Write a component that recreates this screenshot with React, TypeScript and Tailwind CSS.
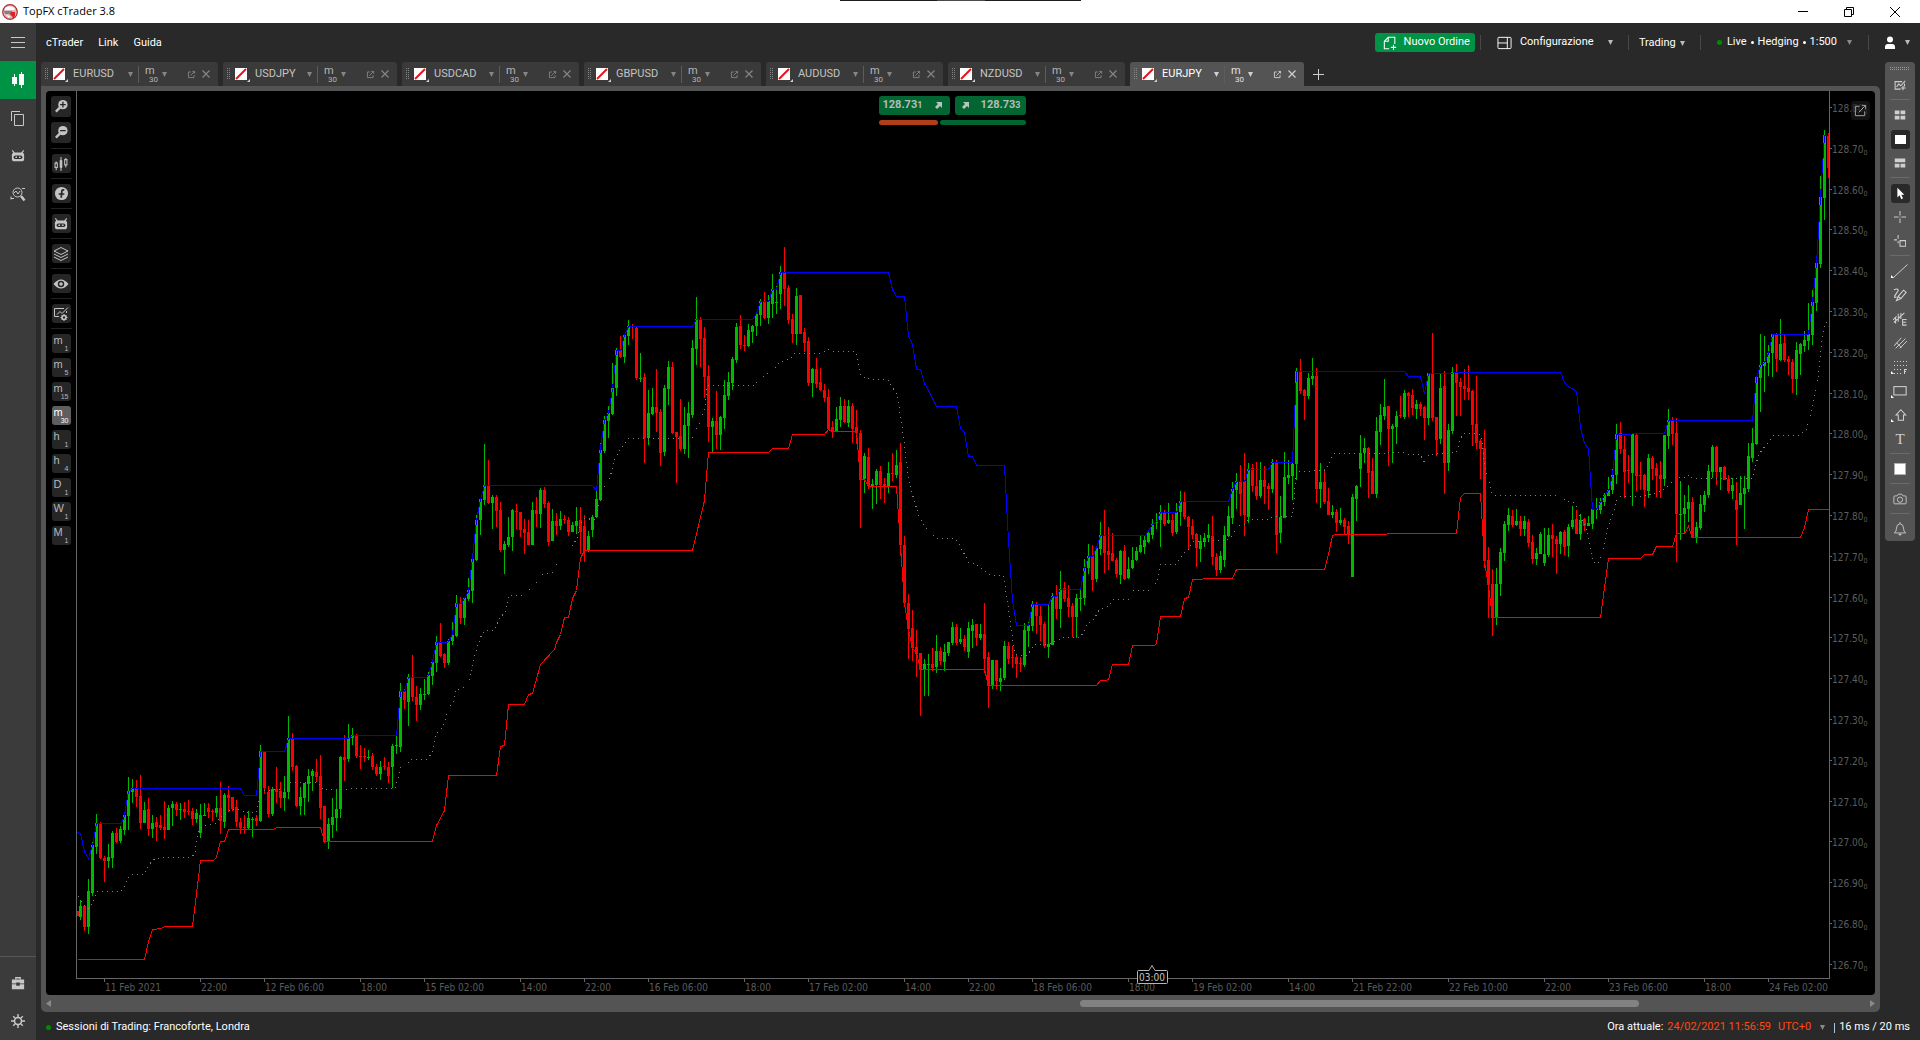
import type { ReactNode } from "react"
import { clsx } from "clsx"

// d = direction (u up, d down), then high, body top, body bottom, low
const CANDLES = `
u900,906,917,920 d905,906,927,931 u879,891,927,934 u842,845,893,896 u814,823,847,854 d822,824,858,859 d856,858,861,882 u844,857,861,868
u831,833,858,868 d828,833,842,843 u826,829,841,843 u813,815,830,835 u777,791,816,830 u779,788,792,803 d780,789,797,807 d775,796,823,829
u802,810,823,823 d798,809,829,836 u815,823,829,838 d817,822,827,841 d815,825,828,830 d801,827,830,839 u805,808,830,830 u801,804,808,826
d802,804,810,816 u803,809,810,820 d802,809,812,818 d800,811,812,815 d808,811,819,825 u809,813,819,823 u804,815,833,838 u803,815,816,816
d803,808,812,818 d809,811,812,821 u796,808,813,817 d782,808,821,834 u793,795,822,828 d786,795,798,812 d797,797,809,811 d800,807,822,827
d818,822,828,834 d815,827,828,834 u811,818,828,829 u817,819,820,837 d815,818,821,826 u745,751,821,822 d751,752,788,794 d786,792,814,817
u787,789,814,816 d767,789,792,803 d782,791,798,808 u776,792,798,811 u716,738,792,799 d733,739,767,771 d765,766,806,807 u787,797,806,815
u783,783,798,815 u769,776,784,802 u769,771,776,791 d759,772,777,782 d755,776,808,819 d806,806,842,843 u818,824,841,849 u798,817,825,838
u789,809,818,831 u756,757,809,818 d735,757,760,781 u724,738,759,762 u728,735,738,745 d734,736,756,758 d745,756,757,769 d748,756,757,762
u750,757,758,760 d753,756,767,770 d764,767,774,776 u761,767,774,780 d757,766,767,770 d762,767,776,783 u744,746,767,788 u735,745,746,754
u683,691,747,752 d689,691,700,709 u674,677,702,726 d655,678,697,701 d686,697,705,721 u688,694,705,710 u679,694,695,700 u672,675,694,695
u662,662,676,685 u636,642,663,672 d623,643,656,657 d653,654,663,668 u639,641,663,665 u622,635,641,645 u595,603,636,637 d597,604,618,624
u597,598,618,625 u578,590,599,601 u553,559,591,603 u515,520,560,561 u499,499,520,535 u444,485,500,505 d460,486,503,504 u495,497,503,529
d495,497,511,527 d502,510,550,552 u541,544,550,574 u517,537,545,547 u509,510,537,551 d504,511,512,529 d512,512,530,537 d519,529,533,554
d520,532,545,545 u502,510,545,545 d497,510,514,527 u488,490,514,528 d487,490,504,508 d501,503,542,546 u509,521,541,541 d513,521,526,535
u511,519,526,530 d515,519,520,524 d517,520,532,536 u522,525,532,532 u507,521,526,534 d507,520,532,554 d515,526,551,562 u531,536,550,552
u515,517,530,537 u491,499,517,518 u443,450,500,500 u416,420,451,453 u406,413,421,438 u363,388,414,415 u348,350,388,396 d336,350,357,358
u335,335,357,363 u320,326,336,345 d324,326,327,339 d327,328,378,380 u353,378,379,382 d373,377,438,463 u390,413,438,445 u388,407,414,415
d369,407,413,432 d409,412,453,466 u385,388,452,456 u361,367,389,405 d362,367,433,434 d432,432,437,483 d399,436,449,451 u407,425,449,454
u402,413,426,458 u340,348,415,418 u297,319,349,365 d317,319,339,367 d327,338,377,398 d365,376,427,442 u418,421,427,452 d391,421,435,449
u416,417,435,450 u380,395,418,429 u372,382,396,400 u357,359,383,390 u323,327,360,363 d315,326,345,349 d335,345,346,351 u324,330,346,347
u325,326,332,343 u312,314,326,336 u299,301,315,326 d292,302,318,319 u295,301,318,324 u274,289,304,318 u286,302,303,314 u266,272,294,309
d247,273,289,306 d285,288,320,324 d314,319,334,343 u288,296,334,345 d295,295,334,334 d328,332,343,352 d337,341,383,386 u368,369,383,397
d358,369,384,388 d368,382,390,391 d384,390,398,402 d389,397,429,429 d421,427,432,438 u407,419,431,431 u397,406,420,427 d399,406,422,423
u400,406,423,427 d403,406,429,443 d410,427,433,444 d430,433,480,528 u453,456,479,493 d448,457,486,489 u479,484,486,509 u469,471,485,504
d466,471,485,499 d478,484,486,503 u462,473,486,493 d453,473,474,481 u450,465,475,478 d443,462,545,556 d536,545,603,606 d594,603,629,659
d610,628,648,661 d630,647,654,677 d653,653,670,716 u659,664,669,696 u654,664,665,696 d648,664,668,671 u635,651,667,673 d647,651,661,665
u644,652,662,671 u642,642,653,656 u622,627,643,645 d624,627,643,645 u628,639,642,644 d635,639,647,651 u622,628,652,658 u619,625,631,648
d624,624,638,646 u624,634,638,640 d603,634,659,673 d652,657,686,708 u660,660,685,689 d660,660,681,689 u668,678,682,691 u641,646,678,680
d642,646,659,664 d646,657,658,668 d655,657,664,678 d657,663,664,672 u623,630,665,667 u622,625,631,647 u601,604,626,631 d602,604,616,634
d606,616,625,641 d622,624,646,648 u604,644,647,658 u593,596,645,645 d585,596,609,619 u571,589,609,628 d582,588,599,602 d585,598,607,617
d603,606,617,637 u594,598,617,638 u589,598,599,611 u559,568,598,605 u544,556,568,574 d545,556,580,591 u546,548,579,582 u522,535,549,555
d510,535,553,573 d527,551,555,570 d533,553,561,561 d558,560,574,577 u550,551,575,584 d545,551,579,580 u557,569,578,579 u547,560,568,569
u547,551,560,561 u536,545,552,553 u535,540,547,554 u531,533,542,543 u519,524,535,539 u513,522,523,529 u505,512,520,547 d510,512,524,526
u503,520,523,524 d514,520,533,536 u503,512,532,534 u491,501,512,526 d492,501,517,519 d516,517,527,550 d519,526,535,539 d533,534,548,567
u535,541,549,562 u533,538,542,547 u524,535,538,542 d516,536,557,565 d553,557,570,576 u551,556,570,573 u526,535,560,567 u506,516,536,537
u482,489,518,524 u473,481,490,509 d465,481,494,516 d453,481,515,536 u463,469,517,523 d464,468,486,492 d462,486,496,500 u462,480,496,498
d466,480,487,504 d483,486,489,510 u459,462,489,493 d460,463,535,553 u496,517,533,543 u452,477,518,518 u460,475,478,484 u462,464,476,500
u368,371,464,480 d359,371,391,394 d389,390,396,420 u373,378,396,399 u358,376,379,385 d368,376,489,503 u463,482,489,508 d469,482,502,504
d488,501,515,515 u505,512,515,518 d509,512,523,532 u508,520,523,525 d518,520,527,534 d521,526,535,544 u494,497,577,577 u485,486,499,521
u435,453,469,487 u438,448,453,463 d447,448,473,498 d458,471,494,494 u417,431,494,498 u404,415,432,445 u379,407,416,420 d406,406,429,466
u424,426,429,463 u411,416,427,444 d396,415,416,418 u390,393,417,419 d392,393,396,417 d389,395,408,415 u400,404,409,419 d402,404,409,416
d406,407,418,440 u373,373,418,425 d333,373,418,421 d417,417,440,456 u374,388,439,444 d371,386,463,494 u424,430,463,471 u367,372,431,434
d364,373,383,416 d378,382,387,416 d369,386,389,400 d365,388,392,400 d390,391,425,446 d376,424,443,449 d439,441,449,479 d430,448,561,568
d547,560,585,618 d569,584,618,636 u568,584,617,625 u548,552,584,596 u521,524,553,561 u508,515,525,531 d510,516,525,527 u509,521,525,526
d516,521,529,536 u516,521,529,536 d519,522,543,547 d535,542,559,564 u548,553,559,565 u532,534,554,554 u528,554,563,566 u528,535,555,557
d524,535,539,557 d536,539,544,574 u531,532,544,554 d530,532,547,555 u524,527,546,557 u506,520,527,529 d510,519,534,534 u514,520,534,540
d518,519,526,531 u516,523,526,526 u509,509,524,529 u498,509,510,519 u498,502,510,514 u493,495,502,506 u477,490,496,496 u469,475,490,494
u424,434,475,484 d422,433,449,454 d436,449,472,498 d455,470,471,483 u433,434,473,506 d433,435,476,491 d462,475,476,490 d474,475,490,507
u454,458,491,498 d456,458,469,480 d463,468,476,497 d461,475,479,498 u435,435,479,486 u409,420,436,449 d417,421,434,445 d418,433,514,562
u481,514,515,540 u495,508,514,534 u485,502,509,522 d497,502,538,538 u522,527,537,543 u495,504,528,530 u491,495,505,512 u465,471,495,498
u445,447,472,478 d446,447,472,485 u467,467,472,490 d466,467,480,480 d475,479,491,493 u478,485,491,499 d482,500,510,545 u476,493,505,505
u476,488,494,529 u443,456,489,492 u428,443,458,462 u377,377,444,445 u334,365,378,412 u336,362,366,392 u345,353,363,376 u334,334,353,377
d333,335,359,372 u319,344,360,361 d335,343,360,362 d356,359,362,375 d359,362,379,393 u342,350,379,395 u343,344,354,375 u331,340,346,352
u303,334,341,350 u290,302,335,345 u263,263,303,311 u176,197,264,268 u130,135,198,220 d133,135,168,178`
  .trim()
  .split(/\s+/)
  .map((entry, i) => {
    const [high, top, bottom, low] = entry.slice(1).split(",").map(Number)
    return { x: 80 + i * 4, up: entry[0] === "u", high, top, bottom, low }
  })

const UPPER =
  "77,832 80,833 84,851 88,858 92,845 96,823 121,823 124,815 128,791 132,788 240,788 244,795 256,795 260,751 284,751 288,738 348,738 352,735 396,735 400,691 404,691 408,677 426,677 428,675 432,661 436,642 447,642 452,634 456,603 461,603 464,598 468,591 472,557 476,520 480,499 484,485 592,485 596,490 600,447 604,420 608,413 612,388 616,350 620,350 624,335 628,326 692,326 696,319 752,319 756,313 760,301 768,301 772,289 776,289 780,272 888,272 892,289 896,296 904,296 908,335 912,344 916,369 920,369 924,383 928,390 936,406 956,406 960,428 964,432 968,456 972,456 976,465 1004,465 1008,540 1012,600 1016,625 1028,625 1032,604 1048,604 1052,596 1056,596 1060,589 1080,589 1084,568 1088,556 1092,556 1096,547 1100,535 1145,535 1152,524 1156,522 1160,512 1176,512 1180,501 1228,501 1232,489 1236,481 1244,481 1248,469 1268,469 1272,462 1292,462 1296,371 1404,371 1408,376 1420,376 1424,393 1428,373 1452,373 1453,372 1560,372 1564,382 1568,386 1576,391 1580,427 1584,443 1588,448 1592,509 1596,509 1600,502 1604,495 1608,490 1612,475 1616,434 1631,434 1632,433 1664,433 1668,420 1752,420 1756,377 1760,365 1764,362 1768,353 1772,334 1808,334 1812,302 1816,263 1820,197 1824,135 1828,135"

const LOWER =
  "77,959 144,959 148,941 152,929 161,928 164,926 192,926 200,860 213,860 216,857 220,841 224,841 228,829 273,829 276,827 320,827 324,841 432,841 436,825 444,810 448,775 496,775 500,746 504,745 508,704 524,704 528,694 532,693 540,664 554,649 556,642 560,634 564,617 568,617 572,598 576,590 580,558 584,550 692,550 704,500 708,452 768,452 772,448 788,448 792,434 824,434 828,429 832,431 856,431 860,479 864,479 868,486 896,486 900,545 904,603 908,629 912,648 916,652 920,669 984,669 988,685 1096,685 1100,680 1105,680 1108,679 1112,664 1128,664 1132,645 1154,645 1156,643 1160,616 1180,616 1184,598 1188,597 1192,579 1202,579 1203,578 1232,578 1236,569 1324,569 1328,554 1332,535 1335,534 1386,534 1387,533 1456,533 1460,497 1464,493 1480,493 1484,561 1488,585 1492,617 1600,617 1605,580 1608,558 1640,558 1644,554 1652,554 1656,546 1672,546 1676,533 1684,533 1688,526 1692,537 1800,537 1804,527 1808,509 1829,509"

const MIDDLE =
  "78,896 84,905 88,908 92,902 96,891 120,891 124,887 128,876 133,874 144,874 148,865 152,860 156,858 163,857 190,857 194,854 198,832 202,825 215,823 220,816 224,815 230,809 240,809 244,812 256,812 260,790 284,789 288,782 318,782 323,789 348,789 352,788 395,788 400,767 404,766 410,759 426,759 432,752 436,733 440,729 444,723 448,708 452,703 456,689 462,688 468,682 472,665 476,648 480,637 484,630 494,630 500,615 504,614 508,595 523,595 529,589 535,583 538,578 544,573 553,572 558,560 563,554 569,550 577,537 580,523 584,518 594,519 600,500 604,485 608,482 615,457 619,450 628,438 692,438 700,420 704,408 707,385 754,385 759,377 763,376 771,371 780,361 789,359 794,353 820,353 828,349 832,351 854,351 857,357 860,374 863,377 871,379 887,379 893,388 897,395 903,437 908,478 913,498 919,517 924,526 934,536 938,538 955,538 958,543 962,550 968,562 973,563 980,567 987,573 991,575 1003,575 1007,602 1012,637 1014,652 1017,655 1027,655 1030,650 1034,644 1048,644 1057,640 1061,637 1080,637 1087,623 1092,621 1099,609 1108,606 1113,599 1128,599 1133,590 1148,590 1157,581 1160,564 1175,564 1183,553 1188,549 1192,541 1226,540 1232,535 1236,525 1243,525 1248,519 1268,519 1272,516 1292,516 1296,471 1325,470 1333,453 1387,453 1389,452 1405,452 1408,454 1420,454 1424,462 1427,459 1428,454 1456,452 1460,438 1464,433 1478,433 1481,436 1484,463 1488,480 1492,494 1495,495 1556,495 1569,501 1574,502 1578,512 1587,530 1592,561 1597,563 1600,559 1604,542 1608,525 1612,515 1616,500 1620,496 1643,496 1660,491 1668,485 1676,477 1685,477 1689,474 1692,478 1752,478 1758,454 1770,439 1773,435 1798,435 1806,429 1812,406 1817,383 1820,353 1823,327 1826,322"

const TIME_LABELS: [number, string][] = [
  [104, "11 Feb 2021"],
  [200, "22:00"],
  [264, "12 Feb 06:00"],
  [360, "18:00"],
  [424, "15 Feb 02:00"],
  [520, "14:00"],
  [584, "22:00"],
  [648, "16 Feb 06:00"],
  [744, "18:00"],
  [808, "17 Feb 02:00"],
  [904, "14:00"],
  [968, "22:00"],
  [1032, "18 Feb 06:00"],
  [1128, "18:00"],
  [1192, "19 Feb 02:00"],
  [1288, "14:00"],
  [1352, "21 Feb 22:00"],
  [1448, "22 Feb 10:00"],
  [1544, "22:00"],
  [1608, "23 Feb 06:00"],
  [1704, "18:00"],
  [1768, "24 Feb 02:00"],
]

const PRICE_LABELS = Array.from({ length: 22 }, (_, k) => ({
  y: Math.round(107 + k * 40.8),
  text: (128.8 - k * 0.1).toFixed(2),
}))

function Chart() {
  return (
    <svg
      viewBox="76 91 1799 904"
      preserveAspectRatio="xMaxYMin meet"
      className="h-full w-full font-['DejaVu_Sans_Condensed',sans-serif] text-[10px]"
      role="img"
      aria-label="EURJPY m30"
    >
      <defs>
        <clipPath id="plot">
          <rect x="77" y="91" width="1752" height="887" />
        </clipPath>
      </defs>
      <g clipPath="url(#plot)" shapeRendering="crispEdges">
        <rect x="77" y="911" width="2" height="5" fill="#f00" />
        {CANDLES.map((c) => (
          <g key={c.x} fill={c.up ? "#00ba00" : "#f00"}>
            <rect x={c.x} y={c.high} width="1" height={c.low - c.high} />
            <rect x={c.x - 1} y={c.top} width="3" height={Math.max(1, c.bottom - c.top)} />
          </g>
        ))}
        <g fill="none" transform="translate(0.5 0.5)">
          <polyline points={LOWER} stroke="#f00" />
          <polyline points={UPPER} stroke="#00f" />
          <polyline points={MIDDLE} stroke="#808080" strokeDasharray="1 4" />
        </g>
      </g>

      <g fill="#666" shapeRendering="crispEdges">
        <rect x="76" y="91" width="1" height="888" />
        <rect x="76" y="978" width="1754" height="1" />
        <rect x="1829" y="91" width="1" height="888" />
        {TIME_LABELS.map(([x]) => (
          <rect key={x} x={x} y="979" width="1" height="3" />
        ))}
        {PRICE_LABELS.map((p) => (
          <rect key={p.y} x="1830" y={p.y} width="2" height="1" />
        ))}
      </g>
      <g fill="#5c5c5c">
        {TIME_LABELS.map(([x, text]) => (
          <text key={x} x={x + 1} y="991">
            {text}
          </text>
        ))}
        {PRICE_LABELS.map((p) => (
          <text key={p.y} x="1832" y={p.y + 5}>
            {p.text}
            <tspan className="text-[7px]" dy="2">
              0
            </tspan>
          </text>
        ))}
      </g>
      <path d="M1138.5 970.5h10.500l3-5 3 5h11.500q1 0 1 1v11q0 1-1 1h-28q-1 0-1-1v-11q0-1 1-1z" fill="#000" stroke="#b5b5b5" />
      <text x="1139" y="981" fill="#c4c4c4">
        03:00
      </text>
    </svg>
  )
}

function Svg({ size = 16, children, className }: { size?: number; children: ReactNode; className?: string }) {
  return (
    <svg width={size} height={size} viewBox="0 0 16 16" fill="none" stroke="currentColor" className={clsx("shrink-0", className)}>
      {children}
    </svg>
  )
}

function Caret({ className }: { className?: string }) {
  return (
    <svg width="5" height="5" viewBox="0 0 5 5" className={clsx("shrink-0", className)}>
      <path d="M0 0h5L2.500 5z" fill="currentColor" />
    </svg>
  )
}

function Logo() {
  return (
    <svg width="16" height="16" viewBox="0 0 16 16">
      <circle cx="8" cy="8" r="7.300" fill="#d9bcbc" stroke="#b02a2a" strokeWidth="1.200" />
      <path d="M3 4q5-3.500 9.500 0v2H3z" fill="#fff" />
      <path d="M2 7h8l1 3H3z" fill="#8a8080" />
      <path d="M9 8h4v4l-2 3-1-3-2-1z" fill="#e01f28" />
      <path d="M4 11l4 1-1 2z" fill="#fff" />
    </svg>
  )
}

const robot = (
  <>
    <path d="M1.500 1.500l2.500 3.500M14.500 1.500L12 5" strokeWidth="1.300" />
    <path d="M1 7q0-3 3-3h8q3 0 3 3v4q0 3-3 3H4q-3 0-3-3z" fill="currentColor" stroke="none" />
    <rect x="3" y="7.500" width="10" height="4" rx="2" fill="#2b2b2b" stroke="none" />
    <path d="M5 9.500h2M9 9.500h2" strokeWidth="1.600" />
  </>
)

const popout = (
  <>
    <path d="M7 3.500H2.500v10h10V9" />
    <path d="M6 10l7.500-7.500M9.500 2.500h4v4" />
  </>
)

function SideNav() {
  return (
    <nav className="flex w-9 shrink-0 flex-col bg-[#3b3b3b] text-[#c8c8c8] [&>button]:flex [&>button]:h-[38px] [&>button]:items-center [&>button]:justify-center">
      <button aria-label="Menu">
        <Svg>
          <path d="M1 3h14M1 8h14M1 13h14" shapeRendering="crispEdges" />
        </Svg>
      </button>
      <button aria-label="Trade" className="bg-[#009345] text-white">
        <Svg>
          <path d="M4.500 2v12M11.500 0v16" />
          <path d="M2 5h5v7H2zM9 2h5v11H9z" fill="currentColor" stroke="none" />
        </Svg>
      </button>
      <button aria-label="Copy">
        <Svg>
          <path d="M1.500 11V1.500H10M4.500 4.500h9v11h-9z" />
        </Svg>
      </button>
      <button aria-label="Automate">
        <Svg size={14}>{robot}</Svg>
      </button>
      <button aria-label="Analyze">
        <Svg>
          <circle cx="7.500" cy="6.500" r="4.500" />
          <path d="M4 7l2-2 2 3 2-3M1 12.500h3M1 10.500v3M12 2.500h3" />
          <path d="M11 10l3.500 4.500" strokeWidth="2.500" />
        </Svg>
      </button>
      <div className="grow" />
      <hr className="mb-[7px] border-[#575757]" />
      <button aria-label="Portfolio">
        <Svg size={14}>
          <path d="M5.500 4V2h5v2" strokeWidth="1.500" />
          <path d="M1 4h14v4.500h-5V7.500H6v1H1zM1 9.500h5v1.500h4V9.500h5V15H1z" fill="currentColor" stroke="none" />
        </Svg>
      </button>
      <button aria-label="Impostazioni">
        <Svg size={14}>
          <circle cx="8" cy="8" r="4" strokeWidth="1.800" />
          <path d="M8 0v4M8 12v4M0 8h4M12 8h4M2.500 2.500l2.500 2.500M11 11l2.500 2.500M13.500 2.500L11 5M5 11l-2.500 2.500" strokeWidth="1.600" />
        </Svg>
      </button>
    </nav>
  )
}

function Separator({ className }: { className?: string }) {
  return <span className={clsx("h-[15px] w-px bg-[#484848]", className)} />
}

function Header() {
  return (
    <header className="flex h-[39px] shrink-0 items-center text-white">
      <nav className="flex gap-[15px] pl-[10px] pt-[2px]">
        <a href="#ctrader">cTrader</a>
        <a href="#link">Link</a>
        <a href="#guida">Guida</a>
      </nav>
      <div className="ml-auto flex items-center">
        <button className="flex h-[19px] w-[100px] items-center justify-between rounded-[3px] bg-[#009345] pr-[5px] pl-2">
          <Svg size={14}>
            <path d="M7 14.500H1.500V6L6 1.500h7.500V9M6 1.500V6H1.500M9 13h6M12 10v6" strokeWidth="1.200" />
          </Svg>
          Nuovo Ordine
        </button>
        <Separator className="ml-[5px]" />
        <button className="ml-4 flex items-center">
          <Svg size={15}>
            <rect x="1" y="2.500" width="14" height="12" rx="1" />
            <path d="M1 8.500h10M11 2.500v12" />
          </Svg>
          <span className="ml-2 w-[73px] text-left">Configurazione</span>
          <Caret className="ml-[15px] text-[#bbb]" />
        </button>
        <Separator className="ml-[15px]" />
        <button className="ml-[10px] flex items-center pt-[2px]">
          <span className="w-[37px] text-left">Trading</span>
          <Caret className="ml-[4px] text-[#bbb]" />
        </button>
        <Separator className="ml-[15px]" />
        <button className="ml-4 flex items-center">
          <span className="size-[5px] rounded-full bg-[#008a00]" />
          <span className="ml-[5px] flex items-center gap-[4px]">
            Live <i className="size-[3px] rounded-full bg-white" /> Hedging <i className="size-[3px] rounded-full bg-white" /> 1:500
          </span>
          <Caret className="ml-[10px] text-[#8a8a8a]" />
        </button>
        <Separator className="ml-4" />
        <button aria-label="Account" className="ml-[15px] mr-[10px] flex items-center">
          <svg width="12" height="14" viewBox="0 0 12 14" fill="#fff">
            <circle cx="6" cy="3.500" r="3" />
            <path d="M1 13v-2q0-3 3-3h4q3 0 3 3v2z" />
          </svg>
          <Caret className="ml-[9px] text-[#bbb]" />
        </button>
      </div>
    </header>
  )
}

const TABS = ["EURUSD", "USDJPY", "USDCAD", "GBPUSD", "AUDUSD", "NZDUSD", "EURJPY"]

function SymbolTab({ symbol, active }: { symbol: string; active: boolean }) {
  return (
    <div
      role="tab"
      aria-selected={active}
      className={clsx(
        "flex h-6 items-center rounded-t-[3px]",
        symbol.endsWith("JPY") ? "w-[174px]" : "w-[177px]",
        active ? "bg-[#545454] text-white" : "bg-[#3a3a3a] text-[#c4c4c4]",
      )}
    >
      <svg width="3" height="12" viewBox="0 0 3 12" className="ml-1 shrink-0" shapeRendering="crispEdges">
        <path d="M.5 0v12M2.500 0v12" stroke="#858585" strokeDasharray="1 1" />
      </svg>
      <svg width="15" height="15" viewBox="0 0 15 15" className="ml-[5px] shrink-0">
        <rect x="0" y="1" width="12" height="12" fill="#fff" />
        <path d="M1 12L11 2" stroke="#e3131b" strokeWidth="2" />
        <path d="M15 12v3h-3z" fill="#d0d0d0" />
      </svg>
      <span className="ml-[5px]">{symbol}</span>
      <span className={clsx("ml-auto flex items-center", active ? "text-[#d0d0d0]" : "text-[#858585]")}>
        <button aria-label={`Simbolo ${symbol}`}>
          <Caret />
        </button>
        <span className="ml-[5px] h-[17px] w-px bg-[#5c5c5c]" />
        <button className="ml-[6px] flex items-center">
          <span className={clsx("flex h-[18px] w-[13px] flex-col", active ? "text-[#e0e0e0]" : "text-[#b5b5b5]")}>
            <span className="text-left leading-[11px]">m</span>
            <span className="text-right text-[8px] leading-[8px]">30</span>
          </span>
          <Caret className="ml-[4px]" />
        </button>
        <button aria-label="Stacca" className="ml-5">
          <Svg size={9}>
            <g strokeWidth="1.600">{popout}</g>
          </Svg>
        </button>
        <button aria-label="Chiudi" className="ml-[6px] mr-2">
          <Svg size={8}>
            <path d="M1 1l14 14M15 1L1 15" strokeWidth="2.400" />
          </Svg>
        </button>
      </span>
    </div>
  )
}

function ToolButton({ label, large, children }: { label: string; large?: boolean; children: ReactNode }) {
  return (
    <button
      aria-label={label}
      className={clsx(
        "flex items-center justify-center rounded-[3px] bg-[#262626] text-[#c4c4c4]",
        large ? "h-[21px] w-5" : "size-[19px]",
      )}
    >
      {children}
    </button>
  )
}

const TIMEFRAMES = ["m1", "m5", "m15", "m30", "h1", "h4", "D1", "W1", "M1"]

function ChartTools() {
  const line = <hr className="my-[5px] w-[21px] border-[#222]" />
  return (
    <div className="flex w-[30px] shrink-0 flex-col items-center pt-[5px]">
      <ToolButton label="Zoom avanti" large>
        <Svg size={15}>
          <circle cx="9.500" cy="6" r="5" fill="currentColor" stroke="none" />
          <path d="M6.500 9L2 13.500" strokeWidth="2.500" />
          <path d="M6.500 6h6M9.500 3v6" stroke="#262626" strokeWidth="1.400" />
        </Svg>
      </ToolButton>
      <div className="h-[5px]" />
      <ToolButton label="Zoom indietro" large>
        <Svg size={15}>
          <circle cx="9.500" cy="6" r="5" fill="currentColor" stroke="none" />
          <path d="M6.500 9L2 13.500" strokeWidth="2.500" />
          <path d="M6.500 6h6" stroke="#262626" strokeWidth="1.400" />
        </Svg>
      </ToolButton>
      {line}
      <ToolButton label="Tipo di grafico">
        <Svg size={14}>
          <path d="M2.500 5v2M2.500 12v3M8 0v16M13.500 1v2M13.500 9v3M1.200 7h2.600v5H1.200zM12.200 3h2.600v6h-2.600z" strokeWidth="1.200" />
          <path d="M7 4h2v8H7z" fill="currentColor" />
        </Svg>
      </ToolButton>
      {line}
      <ToolButton label="Indicatori">
        <Svg size={15}>
          <circle cx="8" cy="8" r="7" fill="currentColor" stroke="none" />
          <path d="M11 4.500Q8.500 3.500 8.300 6L7.700 12.500M5 8.500h6" stroke="#262626" strokeWidth="1.800" />
        </Svg>
      </ToolButton>
      {line}
      <ToolButton label="cBot">
        <Svg size={14}>{robot}</Svg>
      </ToolButton>
      {line}
      <ToolButton label="Livelli">
        <Svg size={16}>
          <path d="M8 1.500l7 3.500-7 3.500L1 5zM1 8l7 3.500L15 8M1 11l7 3.500 7-3.500" />
        </Svg>
      </ToolButton>
      {line}
      <ToolButton label="Visualizza">
        <Svg size={16}>
          <path d="M.500 8Q8-1 15.500 8 8 17 .500 8z" fill="currentColor" stroke="none" />
          <circle cx="8" cy="8" r="2.500" stroke="#262626" strokeWidth="1.500" />
        </Svg>
      </ToolButton>
      {line}
      <ToolButton label="Opzioni grafico">
        <Svg size={16}>
          <path d="M6 10.500H1.500v-8H11M13.500 5v2M4 8.500l3-3 2 2 6-6" />
          <circle cx="11" cy="11.500" r="2" strokeWidth="1.600" />
          <path d="M11 8v1.500M11 13.500V15M7.500 11.500H9M13 11.500h1.500M8.700 9.200l1 1M12.300 12.800l1 1M13.300 9.200l-1 1M9.700 12.800l-1 1" />
        </Svg>
      </ToolButton>
      {line}
      <div className="flex flex-col gap-[5px] font-['Liberation_Sans',sans-serif]">
        {TIMEFRAMES.map((tf) => (
          <button
            key={tf}
            className={clsx(
              "flex size-[19px] flex-col rounded-[3px] px-[2px] pt-px",
              tf === "m30" ? "bg-[#5e5e5e] text-white" : "bg-[#262626] text-[#b8b8b8]",
            )}
          >
            <span className="text-left leading-[11px]">{tf[0]}</span>
            <span className="self-end text-[7px] leading-[6px]">{tf.slice(1)}</span>
          </button>
        ))}
      </div>
    </div>
  )
}

function RailButton({ label, active, corner, children }: { label: string; active?: boolean; corner?: boolean; children: ReactNode }) {
  return (
    <button aria-label={label} className="relative flex size-6 items-center justify-center">
      <span className={clsx("flex size-[19px] items-center justify-center rounded-[3px]", active ? "bg-[#292929] text-white" : "text-[#cfcfcf]")}>
        {children}
      </span>
      {corner && (
        <svg width="3" height="3" viewBox="0 0 3 3" className="absolute bottom-[5px] left-[3px]">
          <path d="M0 0l3 3H0z" fill="#fff" />
        </svg>
      )}
    </button>
  )
}

function DrawingRail() {
  const line = <hr className="mt-[2px] mb-[3px] w-5 border-[#6b6b6b]" />
  return (
    <aside className="flex w-[30px] shrink-0 flex-col items-center self-start rounded-[4px] bg-[#545454]">
      <svg width="20" height="11" viewBox="0 0 20 11" shapeRendering="crispEdges">
        <path d="M0 5.500h20M0 7.500h20" stroke="#999" strokeDasharray="1 1" />
      </svg>
      <RailButton label="Grafico">
        <Svg size={12}>
          <path d="M9 13.500H1.500v-10H11M3.500 10.500l3-4 2.500 2.500 6-6.500M14 6v4M12 9v6M9.500 12h6" strokeWidth="1.400" />
        </Svg>
      </RailButton>
      {line}
      <RailButton label="Griglia">
        <Svg size={12}>
          <path d="M1 2h6.300v5H1zM8.700 2H15v5H8.700zM1 9h6.300v5H1zM8.700 9H15v5H8.700z" fill="currentColor" stroke="none" />
        </Svg>
      </RailButton>
      <RailButton label="Singolo" active>
        <span className="h-[9px] w-[11px] bg-white" />
      </RailButton>
      <RailButton label="Libero">
        <Svg size={12}>
          <path d="M1 2h14v5H1zM1 9h6.300v5H1zM8.700 9H15v5H8.700z" fill="currentColor" stroke="none" />
        </Svg>
      </RailButton>
      {line}
      <RailButton label="Puntatore" active>
        <Svg size={14}>
          <path d="M5 2v11l2.500-2.500L9.500 15l2-1-2-4H13z" fill="currentColor" stroke="none" />
        </Svg>
      </RailButton>
      <RailButton label="Croce">
        <Svg size={12}>
          <path d="M8 0v6M8 10v6M0 8h6M10 8h6M7.500 8h1" strokeWidth="1.300" />
        </Svg>
      </RailButton>
      <RailButton label="Croce con lente">
        <Svg size={12}>
          <path d="M5.500 0v5M5.500 8v3M0 6.500h4M8 7.500h7.500V15H8z" strokeWidth="1.400" />
        </Svg>
      </RailButton>
      {line}
      <RailButton label="Linea" corner>
        <Svg size={16}>
          <path d="M1.500 14.500l14-13" />
        </Svg>
      </RailButton>
      <RailButton label="Matita">
        <Svg size={14}>
          <path d="M1 2q5-2 5 1L2 9q-1 3 2 1M4 14.500l2-5 6-7 3 2.500-6 7zM6 9.500l3 2.500" strokeWidth="1.300" />
        </Svg>
      </RailButton>
      <RailButton label="Equidistante">
        <Svg size={14}>
          <path d="M0 9l4-4M3 13V6M6 11V2M9 8V1M1 12L13 1M15.500 8.500H11v6.500h4.500M11 11.800h4" strokeWidth="1.200" />
        </Svg>
      </RailButton>
      <RailButton label="Forchetta">
        <Svg size={13}>
          <path d="M0 11L9 1M2 14L14 2M7 14l9-9M3 7l6 6" strokeWidth="1.200" />
        </Svg>
      </RailButton>
      <RailButton label="Fibonacci" corner>
        <svg width="15" height="15" viewBox="0 0 15 15" stroke="currentColor" shapeRendering="crispEdges">
          <path d="M1 1.500h14M1 5.500h14M1 9.500h9M1 13.500h9" strokeDasharray="1 2" />
          <path d="M11.500 9v5M11 9.500h3M11 11.500h2" />
        </svg>
      </RailButton>
      <RailButton label="Forme" corner>
        <Svg size={14}>
          <rect x="1" y="3" width="14" height="9.500" strokeWidth="1.200" />
        </Svg>
      </RailButton>
      <RailButton label="Frecce" corner>
        <Svg size={14}>
          <path d="M9 2l5.500 6H12v6H6V8H3.500z" strokeWidth="1.200" />
        </Svg>
      </RailButton>
      <RailButton label="Testo">
        <span className="font-['Liberation_Serif',serif] text-[15px] leading-[15px]">T</span>
      </RailButton>
      {line}
      <RailButton label="Colore">
        <span className="size-3 border border-[#b0b0b0] bg-white" />
      </RailButton>
      {line}
      <RailButton label="Istantanea">
        <Svg size={14}>
          <path d="M1 5.500q0-1 1-1h2.500L6 2.500h4l1.500 2H14q1 0 1 1v7q0 1-1 1H2q-1 0-1-1z" />
          <circle cx="8" cy="8.800" r="3" />
        </Svg>
      </RailButton>
      {line}
      <RailButton label="Avvisi">
        <Svg size={14}>
          <path d="M1.500 12.500Q4 11 4 7q0-4.500 4-5 4 .500 4 5 0 4 2.500 5.500zM8 0v2" />
          <path d="M6.500 14q1.500 2 3 0z" fill="currentColor" />
        </Svg>
      </RailButton>
    </aside>
  )
}

function QuoteButtons() {
  const arrow = (
    <svg width="7" height="7" viewBox="0 0 7 7">
      <path d="M1 0h6v6L5 4 2 7 0 5l3-3z" fill="#b9c4bd" />
    </svg>
  )
  return (
    <div className="absolute top-[5px] left-1/2 w-[147px] -translate-x-[82px]">
      <div className="flex gap-[5px] font-bold text-[#b5bdb8] [&>button]:flex [&>button]:h-[19px] [&>button]:w-[71px] [&>button]:items-center [&>button]:justify-between [&>button]:rounded-[3px] [&>button]:bg-[#036632]">
        <button className="pr-2 pl-[4px]">
          <span>
            128.73<small className="text-[9px]">1</small>
          </span>
          {arrow}
        </button>
        <button className="pr-[5px] pl-[7px]">
          {arrow}
          <span>
            128.73<small className="text-[9px]">3</small>
          </span>
        </button>
      </div>
      <div className="mt-[5px] flex h-[5px] gap-[2px]">
        <span className="w-[59px] rounded-full bg-[#b03e17]" />
        <span className="grow rounded-full bg-[#036632]" />
      </div>
    </div>
  )
}

export default function App() {
  return (
    <div className="flex h-screen flex-col overflow-hidden bg-[#292929] font-['Roboto',sans-serif] text-[11px] text-white">
      <div className="relative flex h-[23px] shrink-0 items-center bg-white pl-[2px] font-['Open_Sans',sans-serif] text-black">
        <Logo />
        <h1 className="ml-[5px]">TopFX cTrader 3.8</h1>
        <div className="absolute top-0 left-1/2 flex h-px w-[241px] -translate-x-[120px] justify-center bg-[#1c1c1c]">
          <span className="w-12 bg-[#4a4a4a]" />
        </div>
        <div className="ml-auto flex items-center gap-9 pr-5">
          <button aria-label="Riduci">
            <svg width="10" height="10" stroke="#000">
              <path d="M0 4.500h10" />
            </svg>
          </button>
          <button aria-label="Ripristina">
            <svg width="10" height="10" fill="none" stroke="#000">
              <path d="M.5 2.500h7v7h-7zM2.500 2.500v-2h7v7h-2" />
            </svg>
          </button>
          <button aria-label="Chiudi finestra">
            <svg width="10" height="10" stroke="#000">
              <path d="M0 0l10 10M10 0L0 10" />
            </svg>
          </button>
        </div>
      </div>

      <div className="flex min-h-0 grow">
        <SideNav />
        <div className="flex min-w-0 grow flex-col">
          <Header />
          <div className="flex min-h-0 grow pr-[5px] pl-[5px]">
            <main className="flex min-w-0 grow flex-col">
              <div role="tablist" className="flex gap-[5px]">
                {TABS.map((symbol) => (
                  <SymbolTab key={symbol} symbol={symbol} active={symbol === "EURJPY"} />
                ))}
                <button aria-label="Nuovo grafico" className="ml-1 text-[#d0d0d0]">
                  <svg width="11" height="11" viewBox="0 0 11 11" stroke="currentColor">
                    <path d="M5.500 0v11M0 5.500h11" />
                  </svg>
                </button>
              </div>
              <div className="flex min-h-0 grow flex-col rounded-[5px] rounded-tl-none bg-[#545454] px-[5px] pt-[5px]">
                <div className="relative flex min-h-0 grow overflow-hidden rounded-[4px] bg-black">
                  <ChartTools />
                  <div className="min-w-0 grow">
                    <Chart />
                  </div>
                  <QuoteButtons />
                  <button
                    aria-label="Apri in una finestra"
                    className="absolute top-[10px] right-[5px] flex size-[19px] items-center justify-center rounded-[3px] bg-[#1f1f1f]/60 text-[#a8a8a8]"
                  >
                    <Svg size={15}>{popout}</Svg>
                  </button>
                </div>
                <div className="flex h-[17px] shrink-0 items-center text-[#8a8a8a]">
                  <svg width="5" height="7" viewBox="0 0 5 7">
                    <path d="M5 0v7L0 3.500z" fill="currentColor" />
                  </svg>
                  <div className="flex grow">
                    <span className="grow-[1029]" />
                    <span className="h-[7px] grow-[559] rounded-full bg-[#828282]" />
                    <span className="grow-[231]" />
                  </div>
                  <svg width="5" height="7" viewBox="0 0 5 7">
                    <path d="M0 0v7l5-3.500z" fill="currentColor" />
                  </svg>
                </div>
              </div>
            </main>
            <div className="ml-[5px] flex shrink-0">
              <DrawingRail />
            </div>
          </div>
          <footer className="flex h-7 shrink-0 items-center px-[10px] pt-[3px]">
            <span className="size-[5px] rounded-full bg-[#008a00]" />
            <span className="ml-[5px]">Sessioni di Trading: Francoforte, Londra</span>
            <span className="ml-auto">Ora attuale:</span>
            <time className="ml-[4px] text-[#ff4a12]">24/02/2021 11:56:59</time>
            <button className="ml-[7px] flex items-center text-[#ff4a12]">
              UTC+0
              <Caret className="ml-[9px] text-[#8a8a8a]" />
            </button>
            <span className="mr-[4px] ml-[9px] h-[10px] w-px bg-[#a9c4dd]" />
            <span>16 ms / 20 ms</span>
          </footer>
        </div>
      </div>
    </div>
  )
}
